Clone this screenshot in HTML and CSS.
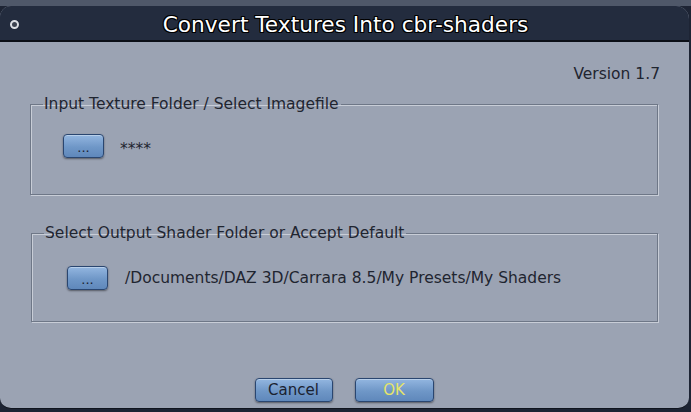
FILE: index.html
```html
<!doctype html>
<html>
    <head>
        <title>Convert Textures Into cbr-shaders</title>
        <link rel="stylesheet" href="styles.css">
    </head>
    <body>
        <div class="window">
            <div class="titlebar">
                <span class="close-dot"></span>
                <span class="title">Convert Textures Into cbr-shaders</span>
            </div>
            <div class="content">
                <div class="version">Version 1.7</div>
                <fieldset class="group group-input">
                    <legend>Input Texture Folder / Select Imagefile</legend>
                    <div class="row">
                        <button class="btn btn-small">...</button>
                        <span class="path">****</span>
                    </div>
                </fieldset>
                <fieldset class="group group-output">
                    <legend>Select Output Shader Folder or Accept Default</legend>
                    <div class="row">
                        <button class="btn btn-small">...</button>
                        <span class="path">/Documents/DAZ 3D/Carrara 8.5/My Presets/My Shaders</span>
                    </div>
                </fieldset>
                <div class="actions">
                    <button class="btn btn-wide btn-cancel">Cancel</button>
                    <button class="btn btn-wide btn-ok">OK</button>
                </div>
            </div>
        </div>
    </body>
</html>
```

FILE: styles.css
```css
* {
    box-sizing: border-box;
}
body {
    margin: 0;
    width: 691px;
    height: 412px;
    overflow: hidden;
    background: linear-gradient(#4f5869 0, #4f5869 6px, #1d2434 6px);
    font-family: "DejaVu Sans", Verdana, sans-serif;
    color: #1f2530;
}
.window {
    margin-top: 6px;
    width: 689px;
    height: 403px;
    background: #9ba3b3;
    border-radius: 11px 13px 11px 11px;
    border-bottom: 1px solid #10151f;
    overflow: hidden;
    display: flex;
    flex-direction: column;
}
.titlebar {
    height: 36px;
    background: #232c3e;
    border-bottom: 2px solid #0b0f17;
    display: flex;
    align-items: center;
    position: relative;
}
.close-dot {
    position: absolute;
    left: 10px;
    top: 14px;
    width: 9px;
    height: 9px;
    border-radius: 50%;
    background: #3b4250;
    border: 2px solid #dcdfe4;
}
.title {
    flex: 1;
    text-align: center;
    color: #fff;
    font-size: 21.7px;
    padding-top: 2px;
    padding-left: 2px;
    text-shadow: 1px 0 0 #000, -1px 0 0 #000, 0 1px 0 #000, 0 -1px 0 #000,
        1px 1px 0 #000, -1px -1px 0 #000, 1px -1px 0 #000, -1px 1px 0 #000;
}
.content {
    flex: 1;
    display: flex;
    flex-direction: column;
    padding: 0 31px 6px 30px;
}
.version {
    margin-top: 24px;
    margin-right: -2px;
    text-align: right;
    font-size: 15.5px;
    line-height: 17px;
}
.group {
    margin: 0;
    padding: 0;
    border: 1px solid #6e7787;
    box-shadow: 1px 1px 0 #c8cdd7, inset 1px 1px 0 #c8cdd7;
    min-width: 0;
}
.group legend {
    font-size: 15.5px;
    line-height: 18px;
    padding: 0 2px 0 1px;
    margin-left: 12px;
}
.group-input {
    margin-top: 12px;
    height: 100px;
}
.group-input .row {
    padding: 21px 0 0 32px;
}
.group-output {
    margin: 29px 0 0 1px;
    height: 98px;
}
.group-output .row {
    padding: 24px 0 0 35px;
}
.row {
    display: flex;
    align-items: center;
    gap: 16px;
}
.group-output .row {
    gap: 17px;
}
.path {
    font-size: 15.5px;
    color: #1f2530;
}
.group-input .path {
    padding-top: 5px;
}
.btn {
    height: 24px;
    border: 1px solid #2a4670;
    border-radius: 4px;
    background: linear-gradient(#93b6e0, #6f97c7 55%, #5f88bb);
    box-shadow: 0 1px 2px rgba(0, 0, 0, 0.45), inset 0 1px 0 rgba(255, 255, 255, 0.35);
    font-family: "DejaVu Sans", Verdana, sans-serif;
    font-size: 13px;
    color: #1a2230;
    padding: 0;
}
.btn-small {
    width: 41px;
    font-size: 13px;
    padding-top: 3px;
}
.actions {
    margin-top: auto;
    display: flex;
    justify-content: center;
    gap: 22px;
}
.btn-wide {
    width: 79px;
    font-size: 15px;
}
.btn-cancel {
    width: 78px;
}
.btn-ok {
    color: #e4e46a;
}
```
